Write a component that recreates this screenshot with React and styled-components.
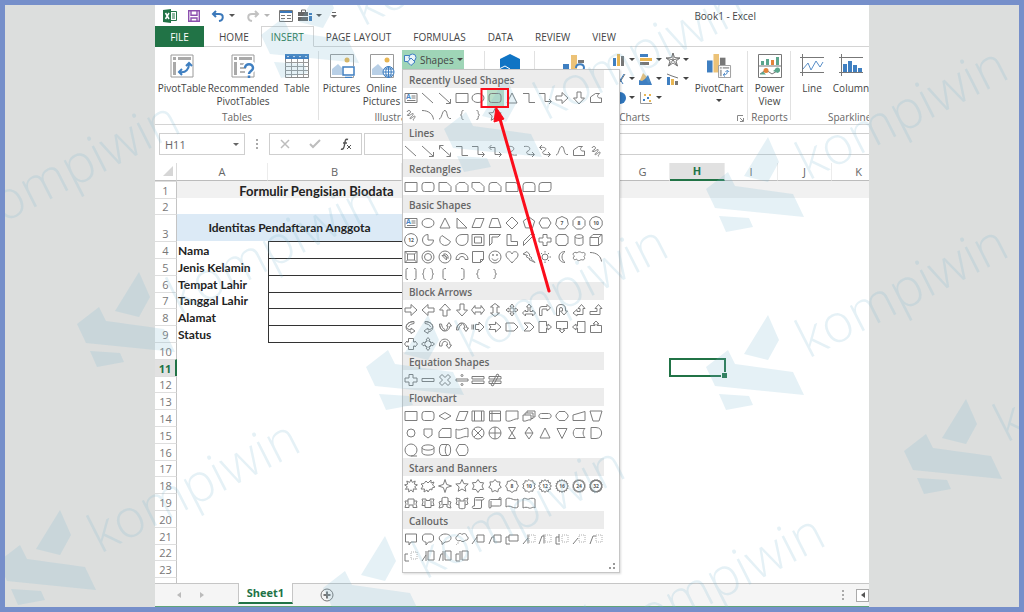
import React from "react";
import styled, { createGlobalStyle } from "styled-components";

const GlobalStyle = createGlobalStyle`
  * {
    box-sizing: border-box;
  }
  body {
    margin: 0;
    font-family: "Open Sans", "Noto Sans", sans-serif;
    font-size: 10px;
    color: #444;
  }
  button, input {
    font: inherit;
    color: inherit;
    margin: 0;
    padding: 0;
    border: 0;
    background: none;
  }
  svg {
    display: block;
    flex: none;
  }
`;

const Page = styled.div`
  position: relative;
  display: flex;
  min-height: 100vh;
  padding: 0 150px;
  border: 5px solid #768fca;
  background: #dcdedd;
  overflow: hidden;
`;

const Window = styled.main`
  flex: 1;
  min-width: 0;
  display: flex;
  flex-direction: column;
  background: #fff;
  overflow: hidden;
`;

const TitleBar = styled.header`
  display: flex;
  align-items: center;
  justify-content: space-between;
  height: 21px;
  padding: 0 113px 0 8px;
`;

const QuickAccess = styled.div`
  display: flex;
  align-items: center;
  gap: 5px;
`;

const QuickButton = styled.button`
  display: flex;
  align-items: center;
  gap: 4px;
  height: 16px;
  margin-right: ${(props) => props.$space || 0}px;
  color: ${(props) => (props.$faded ? "#b5b5b5" : "#555")};
`;

const DocTitle = styled.h1`
  margin: 0;
  font-size: 10px;
  font-weight: 400;
`;

const Caret = styled.span`
  flex: none;
  width: 0;
  height: 0;
  border: 3px solid transparent;
  border-top-color: currentColor;
  border-bottom: 0;
`;

const TabBar = styled.nav`
  display: flex;
  height: 21px;
  border-bottom: 1px solid #d4d4d4;
`;

const Tab = styled.button`
  height: 21px;
  margin: 0 1px;
  padding: 0 9px;
  border: 1px solid transparent;
  white-space: nowrap;
  ${(props) =>
    props.$active &&
    `
    color: #217346;
    background: #fff;
    border-color: #d4d4d4 #d4d4d4 #fff;
  `}
`;

const FileTab = styled.button`
  height: 21px;
  width: 49px;
  margin-right: 4px;
  background: #217346;
  color: #fff;
`;

const Ribbon = styled.div`
  display: flex;
  height: 78px;
  border-bottom: 1px solid #d4d4d4;
`;

const Group = styled.section`
  flex: none;
  position: relative;
  display: flex;
  flex-direction: column;
  width: ${(props) => props.$width}px;
  padding: 3px 3px 0;

  &::after {
    content: "";
    position: absolute;
    right: 0;
    top: 4px;
    bottom: 4px;
    border-right: 1px solid #e1e1e1;
  }
`;

const Items = styled.div`
  display: flex;
  gap: 2px;
  height: 62px;
`;

const Caption = styled.div`
  padding-right: ${(props) => (props.$launcher ? 14 : 0)}px;
  line-height: 13px;
  text-align: center;
  white-space: nowrap;
  color: #666;
`;

const Launcher = styled.button`
  position: absolute;
  right: 4px;
  bottom: 2px;
`;

const BigButton = styled.button`
  flex: none;
  display: flex;
  flex-direction: column;
  align-items: center;
  gap: 4px;
  width: ${(props) => props.$width}px;
  padding-top: 4px;
  line-height: 13px;
`;

const MiniGrid = styled.div`
  flex: none;
  display: grid;
  grid-template-columns: repeat(3, 27px);
  grid-auto-rows: 19px;
`;

const MiniButton = styled.button`
  display: flex;
  align-items: center;
  gap: 3px;
`;

const ShapesWrap = styled.div`
  position: relative;
  width: 62px;
  height: 19px;
`;

const ShapesButton = styled.button`
  display: flex;
  align-items: center;
  gap: 3px;
  width: 100%;
  height: 19px;
  padding: 0 2px;
  background: #9fd5b7;
`;

const Gallery = styled.div`
  position: absolute;
  z-index: 5;
  left: 0;
  top: 100%;
  width: 218px;
  height: 504px;
  padding-right: 15px;
  border: 1px solid #c6c6c6;
  background: #fff;
  box-shadow: 1px 1px 2px rgba(0, 0, 0, 0.15);
`;

const SectionTitle = styled.h2`
  height: 18px;
  margin: 0 0 1px;
  padding-left: 6px;
  line-height: 20px;
  font-size: 10px;
  font-weight: 600;
  background: #ececec;
  color: #666;
`;

const ShapeGrid = styled.div`
  display: grid;
  grid-template-columns: repeat(12, 1fr);
  grid-auto-rows: 17px;
`;

const ShapeButton = styled.button`
  display: flex;
  align-items: center;
  justify-content: center;
  background: ${(props) => (props.$picked ? "#b9dfc9" : "none")};
`;

const Grip = styled.svg`
  position: absolute;
  right: 3px;
  bottom: 2px;
`;

const FormulaBar = styled.div`
  display: flex;
  align-items: stretch;
  height: 38px;
  padding: 8px 0 8px 4px;
  color: #666;
`;

const NameBox = styled.label`
  display: flex;
  align-items: center;
  width: 86px;
  padding: 0 5px;
  border: 1px solid #cfcfcf;

  input {
    flex: 1;
    min-width: 0;
    outline: none;
    font-size: 11px;
  }
`;

const Dots = styled.div`
  display: flex;
  align-items: center;
  justify-content: center;
  width: 24px;
`;

const FormulaTools = styled.div`
  display: flex;
  align-items: center;
  justify-content: space-around;
  width: 93px;
  margin-right: 2px;
  border: 1px solid #cfcfcf;
`;

const FormulaInput = styled.input`
  flex: 1;
  min-width: 0;
  border: 1px solid #cfcfcf;
  border-right: 0;
`;

const SheetArea = styled.div`
  flex: 1;
  min-width: 0;
  overflow: hidden;
`;

const Sheet = styled.table`
  table-layout: fixed;
  width: 731px;
  border-spacing: 0;
  font-family: Lato, "Open Sans", sans-serif;
  font-size: 12px;
  line-height: 14px;
  color: #222;
`;

const Col = styled.col`
  width: ${(props) => props.$width}px;
`;

const ColHead = styled.th`
  height: 18px;
  padding: 0;
  border-right: 1px solid #ececec;
  border-bottom: 1px solid #bcbcbc;
  font-family: "Open Sans", sans-serif;
  font-size: 11px;
  font-weight: 400;
  color: #666;
  ${(props) =>
    props.$active &&
    `
    background: #e1e1e1;
    border-bottom: 2px solid #217346;
    color: #217346;
    font-weight: 700;
  `}
`;

const Corner = styled(ColHead)`
  border-right-color: #dcdcdc;

  svg {
    margin-left: 8px;
  }
`;

const Row = styled.tr`
  height: ${(props) => props.$height}px;
`;

const RowHead = styled.th`
  padding: 0;
  vertical-align: bottom;
  border-top: 1px solid #dedede;
  border-right: 1px solid #c4c4c4;
  font-family: "Open Sans", sans-serif;
  font-size: 11px;
  font-weight: 400;
  color: #777;
  ${(props) =>
    props.$active &&
    `
    background: #e1e1e1;
    border-right: 2px solid #217346;
    color: #217346;
    font-weight: 700;
  `}
`;

const Cell = styled.td`
  padding: 0 1px;
  font-weight: 700;
  white-space: nowrap;
  vertical-align: bottom;
`;

const TitleCell = styled(Cell)`
  text-align: center;
  font-size: 13px;
  background: #f1f1f1;
`;

const HeadingCell = styled(Cell)`
  text-align: center;
  vertical-align: middle;
  background: #dceaf6;
`;

const BoxCell = styled(Cell)`
  border-top: 1px solid #333;
  border-left: ${(props) => (props.$last ? "0" : "1px solid #333")};
`;

const ActiveCell = styled(Cell)`
  position: relative;
  outline: 2px solid #217346;
  outline-offset: -1px;

  &::after {
    content: "";
    position: absolute;
    right: -2px;
    bottom: -2px;
    width: 5px;
    height: 5px;
    border: 1px solid #fff;
    border-width: 1px 0 0 1px;
    background: #217346;
  }
`;

const SheetBar = styled.footer`
  display: flex;
  align-items: center;
  height: 24px;
  border-top: 1px solid #c6c6c6;
  border-bottom: 1px solid #60a57a;
  background: #f5f5f5;
`;

const SheetNav = styled.div`
  display: flex;
  justify-content: center;
  gap: 18px;
  width: 83px;
  padding-right: 12px;
`;

const SheetTab = styled.button`
  align-self: flex-start;
  width: 55px;
  height: 21px;
  margin-top: -1px;
  margin-right: 27px;
  border: 1px solid #c6c6c6;
  border-width: 0 1px;
  border-bottom: 2px solid #217346;
  background: #fff;
  font-weight: 700;
  font-size: 11px;
  color: #217346;
`;

const ScrollBox = styled.button`
  display: flex;
  align-items: center;
  justify-content: center;
  width: 13px;
  height: 13px;
  border: 1px solid #ababab;
  background: #fff;
`;

const BarEnd = styled.div`
  display: flex;
  align-items: center;
  gap: 12px;
  margin-left: auto;
`;

const Overlay = styled.svg`
  position: absolute;
  inset: 0;
  width: 100%;
  height: 100%;
  z-index: 10;
  pointer-events: none;
`;

// ---------- shape drawings, all on a 16 x 16 canvas ----------

const points = (list) =>
  "M" + list.map(([x, y]) => `${x.toFixed(1)} ${y.toFixed(1)}`).join("L") + "z";

const polygon = (n, r = 6, turn = 0) =>
  points(
    Array.from({ length: n }, (_, i) => {
      const a = (Math.PI * 2 * i) / n - Math.PI / 2 + turn;
      return [8 + r * Math.cos(a), 8 + r * Math.sin(a)];
    })
  );

const star = (n, outer, inner) =>
  points(
    Array.from({ length: n * 2 }, (_, i) => {
      const a = (Math.PI * i) / n - Math.PI / 2;
      const r = i % 2 ? inner : outer;
      return [8 + r * Math.cos(a), 8 + r * Math.sin(a)];
    })
  );

const circle = (r, x = 8, y = 8) =>
  `M${x - r} ${y}a${r} ${r} 0 1 0 ${r * 2} 0a${r} ${r} 0 1 0 ${-r * 2} 0z`;

const shapes = {
  textBox: "M2 3.500h12v9H2zM8.500 6h4M8.500 8h4M4 10.500h8.500",
  line: "M2 3l11 10",
  arrow: "M2 3l11 10M13.500 9v4.500H9",
  doubleArrow: "M2.500 3l11 10M13.500 9.500v4h-4M2.500 6.500v-4h4",
  elbow: "M2 3.500h6v9h6",
  elbowArrow: "M2 3.500h6v8h6M12 9l2.500 2.500L12 14",
  elbowDouble: "M3 4.500h5v7h6M12 9l2.500 2.500L12 14M4.500 2L2 4.500 4.500 7",
  curveLine: "M4 3.500c8-1 6 4 4 4.500s-3 5 5 4",
  curveArrow: "M3 3.500c8-1 6 4 4 4.500s-3 4.500 6 3.500M11 9l2.500 2.500L11 14",
  curveDouble:
    "M3 4.500c8-1 6 3 4 3.500s-3 4.500 6 3.500M11 9l2.500 2.500L11 14M5 2L2.500 4.500 5 7",
  curve: "M2 12c3 0 3-9 6-8.500s1 9 6 8",
  freeform: "M2.500 12.500V7l5-3.500h4C9 5 9 7 11 8h2.500v4.500z",
  scribble: "M4 5c1-3 5-1 3 1S3 8 5 8.500s6-4 5-1-4 3-3 4 5-4 5-2-3 3-1 4",
  arc: "M2 3.500c7 0 11 4 11.500 9",
  leftBrace: "M9.500 3.500c-3-.5-.5 4-3 4.500 2.500.5 0 5 3 4.500",
  rightBrace: "M6.500 3.500c3-.5.5 4 3 4.500-2.500.5 0 5-3 4.500",
  rectangle: "M2 3.500h12v9H2z",
  rounded: "M4.500 3.500h7q2.500 0 2.500 2.500v4q0 2.500-2.500 2.500h-7Q2 12.500 2 10V6q0-2.500 2.500-2.500z",
  oval: "M2 8c0-6 12-6 12 0s-12 6-12 0z",
  triangle: "M8 3l5 10H3z",
  rightTriangle: "M3 3v10h10z",
  parallelogram: "M5.500 3.500H14l-3.500 9H2z",
  trapezoid: "M5 3.500h6l3 9H2z",
  diamond: "M8 2l6 6-6 6-6-6z",
  pentagon: polygon(5, 6),
  hexagon: "M5 3h6l3 5-3 5H5L2 8z",
  poly7: polygon(7, 6.5),
  poly8: polygon(8, 6.5, Math.PI / 8),
  poly10: polygon(10, 6.5),
  poly12: polygon(12, 6.5),
  pie: "M8 2.500a5.500 5.500 0 1 0 5.500 5.500H8z",
  chord: "M5 3.500a5.500 5.500 0 1 0 8.500 6z",
  teardrop: "M14 2.500V8a6 5.500 0 1 1-6-5.500z",
  frame: "M2 2.500h12v11H2zM4.500 5h7v6h-7z",
  halfFrame: "M2.500 13.500v-11h11L11 5H5v6z",
  lShape: "M3 2.500h4v7h6.500v4H3z",
  diagonalStripe: "M2.500 9.500l7-7h4l-11 11z",
  cross: "M6 2.500h4V6h4v4h-4v3.500H6V10H2V6h4z",
  plaque: "M4 2.500h8q0 2 2 2v7q-2 0-2 2H4q0-2-2-2v-7q2 0 2-2z",
  can: "M4 4.500v7c0 2.500 8 2.500 8 0v-7c0-2.500-8-2.500-8 0zM4 4.500c0 2.500 8 2.500 8 0",
  cube: "M2 5.500h8.500v8H2zM2 5.500l3-3h9l-3.500 3M14 2.500v8l-3.500 3",
  bevel: "M2 2.500h12v11H2zM4.500 5h7v6h-7zM2 2.500L4.500 5M14 2.500L11.500 5M14 13.500L11.500 11M2 13.500L4.500 11",
  donut: circle(6) + circle(3.5),
  noSymbol: circle(6) + "M5 6.500A3.600 3.600 0 0 1 9.500 11zM6.500 5A3.600 3.600 0 0 1 11 9.500z",
  blockArc: "M2 10.500c0-8 12-8 12 0h-3c0-4-6-4-6 0z",
  folded: "M2.500 2.500h11v8l-3 3h-8zM13.500 10.500h-3v3",
  smiley: circle(6) + circle(0.6, 6, 6) + circle(0.6, 10, 6) + "M5 9.500c1 2.500 5 2.500 6 0",
  heart: "M8 5C7 1.500 2 2 2 6c0 3 4 5 6 8 2-3 6-5 6-8 0-4-5-4.500-6-1z",
  lightning: "M6 2.500l3 3.500-1 .5L11 9l-1 .5 4 4-6-3 1-.5-4-2.500 1.500-1L2 5z",
  sun: circle(3) + "M8 2v1.500M8 12.500V14M2 8h1.500M12.500 8H14M4 4l1 1M11 11l1 1M12 4l-1 1M5 11l-1 1",
  moon: "M11 2.500c-8 0-8 11 0 11-4-3-4-8 0-11z",
  cloud: "M3.500 7C0 5 4 2 6 4c2-2 4-1 5 0 3-2 4 2 2 3.500 2 3-1 4-3 3-2 2-4 1-4.500-.5C3 12 1 9 3.500 7z",
  doubleBracket: "M5 2.500c-2 0-2 .5-2 2v7c0 1.500 0 2 2 2M11 2.500c2 0 2 .5 2 2v7c0 1.500 0 2-2 2",
  doubleBrace: "M5.500 2.500c-3 0-1 5.500-3 5.500 2 0 0 5.500 3 5.500M10.500 2.500c3 0 1 5.500 3 5.500-2 0 0 5.500-3 5.500",
  leftBracket: "M9 2.500c-2 0-3 .5-3 2v7c0 1.500 1 2 3 2",
  rightBracket: "M7 2.500c2 0 3 .5 3 2v7c0 1.500-1 2-3 2",
  arrowRight: "M2 6h6V2.500L14 8l-6 5.500V10H2z",
  arrowLeft: "M14 6H8V2.500L2 8l6 5.500V10h6z",
  arrowUp: "M6 14V8H2.500L8 2l5.500 6H10v6z",
  arrowDown: "M6 2v6H2.500L8 14l5.500-6H10V2z",
  leftRight: "M5 3.500V6h6V3.500L14.500 8 11 12.500V10H5v2.500L1.500 8z",
  upDown: "M3.500 5H6v6H3.500L8 14.500l4.500-3.500H10V5h2.500L8 1.500z",
  quad: "M8 2l2 2.500H9V7h2.500V6L14 8l-2.500 2V9H9v2.500h1L8 14l-2-2.500h1V9H4.500v1L2 8l2.500-2v1H7V4.500H6z",
  leftRightUp: "M8 2l2.500 3H9v4.500h2.500V8l3 3-3 3v-2h-7v2l-3-3 3-3v1.500H7V5H5.500z",
  bent: "M2.500 13.500V7q0-2.500 2.500-2.500h5v-2L13.500 6 10 9V7H6q-1 0-1 1v5.500z",
  uTurn: "M2.500 13.500V7q0-4.500 4.500-4.500T11.500 7v2h2l-3.500 4L6.500 9h2V7q0-1.500-1.500-1.500T5.500 7v6.500z",
  leftUp: "M10.500 2.500l3.500 4h-2v6H6v1.500L2 11l4-3.500v2h3v-3H7z",
  bentUp: "M10.500 2.500l3.500 4h-2v6H2v-3h7v-3H7z",
  curvedRight: "M11 2.500C2 3 1 10 8 11V9l4 3-4 2.500V13C1 12 1 3 11 2.500M11 2.500v2C8 5 6 6 5.500 8",
  curvedLeft: "M5 2.500C14 3 15 10 8 11V9l-4 3 4 2.500V13c7-1 7-10-3-10.500M5 2.500v2C8 5 10 6 10.500 8",
  curvedUp: "M2.500 5C3 13 10 14 11 7H9.500L12 3.500 14.500 7H13c-1 7-10 7-10.500-2M2.500 5h2c.5 3 1.500 5 3.500 5.500",
  curvedDown: "M2.500 11C3 3 10 2 11 9H9.500l2.500 3.500L14.500 9H13C12 2 3 2 2.500 11M2.500 11h2c.5-3 1.500-5 3.500-5.500",
  striped: "M2 5.500v5M3.500 5.500v5M5.500 5.500H9V3l5 5-5 5v-2.500H5.500z",
  notched: "M2 5.500h6.500V3L14 8l-5.500 5v-2.500H2L4 8z",
  arrowPentagon: "M2 4h8l4 4-4 4H2z",
  chevron: "M3 4h6l4 4-4 4H3l4-4z",
  rightCallout: "M2 2.500h7.500V7H11V5l3.500 3-3.500 3V9H9.500v4.500H2z",
  downCallout: "M2.500 2.500h11v7H9V11h2l-3 3-3-3h2V9.500H2.500z",
  leftCallout: "M14 2.500H6.500V7H5V5L1.500 8 5 11V9h1.500v4.500H14z",
  upCallout: "M2.500 13.500h11v-7H9V5h2L8 2 5 5h2v1.500H2.500z",
  leftRightCallout: "M5.500 2.500h5V6H12V5l2.500 3-2.500 3v-1h-1.500v3.500h-5V10H4v1L1.500 8 4 5v1h1.500z",
  quadCallout: "M8 1.500l2 2.500H9v1.500h1.500V7H12V6l2.500 2-2.500 2V9h-1.500v1.500H9V12h1l-2 2.500L6 12h1v-1.500H5.500V9H4v1L1.500 8 4 6v1h1.500V5.500H7V4H6z",
  circular: "M2.500 10c-1-9 11-9 10.500-1h1.500L12 12.500 9 9h1.500C11 4 4.500 4 5 10z",
  minus: "M2 6.500h12v3H2z",
  times: "M5 2.500l3 3 3-3L13.500 5l-3 3 3 3-2.500 2.500-3-3-3 3L2.500 11l3-3-3-3z",
  divide: "M2 7h12v2H2z" + circle(1, 8, 3.5) + circle(1, 8, 12.5),
  equal: "M2 4.500h12v2.500H2zM2 9h12v2.500H2z",
  notEqual: "M2 4.500h12v2.500H2zM2 9h12v2.500H2zM10 2l2 1-6 11-2-1z",
  flatDiamond: "M8 4.500L14 8l-6 3.500L2 8z",
  predefined: "M2 3h12v10H2zM4.500 3v10M11.500 3v10",
  internal: "M2.500 3h11v10h-11zM5 3v10M2.500 5.500h11",
  document: "M2 3h12v8c-4-1-8 4-12 1.500z",
  multiDocument: "M2 7h8v5c-3-1-5 2-8 1zM4 7V5h8v5.500h-2M6 5V3h8v6h-2",
  terminator: "M4.500 5.500h7c3.500 0 3.500 5 0 5h-7c-3.500 0-3.500-5 0-5z",
  preparation: "M5 3.500h6L14 7v2l-3 3.500H5L2 9V7z",
  manualInput: "M2 7l12-3.500v9H2z",
  manualOperation: "M2 3h12l-3 10H5z",
  connector: circle(4),
  offPage: "M4 4h8v6l-4 3-4-3z",
  card: "M5 3.500h9v9H2V7z",
  tape: "M2 4c4 3 8-2 12-.5V12c-4-2-8 3-12 1z",
  junction: circle(6) + "M4 4l8 8M12 4l-8 8",
  orShape: circle(6) + "M8 2v12M2 8h12",
  collate: "M4.500 2.500h7L8 8l3.500 5.500h-7L8 8z",
  sort: "M8 2l4 6-4 6-4-6zM4 8h8",
  merge: "M8 13.500l-5-10h10z",
  stored: "M4.500 3.500H14c-2.500 2-2.500 7 0 9H4.500c-3-2-3-7 0-9z",
  delay: "M3 2.500h5c7.500 0 7.500 11 0 11H3z",
  sequential: circle(6) + "M8 14h6",
  disk: "M2 5.500v5c0 3.500 12 3.500 12 0v-5C14 2 2 2 2 5.500zM2 5.500C2 9 14 9 14 5.500",
  direct: "M5 2.500h6c3.500 0 3.500 11 0 11H5c-3.500 0-3.500-11 0-11zM10.500 2.500c-3 1-3 10 0 11",
  display: "M5 2.500h6c4 2 4 9 0 11H5L2 8z",
  explosion1: star(9, 6.5, 3.8),
  explosion2: "M6 3l2 2 3-3v3l3-1-1.500 3L15 9l-3 1v2l-2-1-2 3-1-2-3 2 .5-3L1 11l2-3-2-2 3-.5z",
  star4: star(4, 6.5, 2.2),
  star5: star(5, 6.5, 3),
  star6: star(6, 6.5, 4),
  star7: star(7, 6.5, 4.5),
  star8: star(8, 6.5, 5.3),
  star10: star(10, 6.5, 5.2),
  star12: star(12, 6.5, 5),
  star16: star(16, 6.5, 5),
  star24: star(24, 6.5, 5),
  star32: star(32, 6.5, 5),
  ribbonUp: "M2 6h3V4h6v2h3l-1 3 1 3.500h-4V10H6v2.500H2L3 9zM5 6v4M11 6v4",
  ribbonDown: "M2 4h4v1.500h4V4h4l-1 3 1 3.500h-3v2H5v-2H2L3 7zM5 5.500v5M11 5.500v5",
  curvedRibbonUp: "M2 7l3-1V3c2-1 4-1 6 0v3l3 1-1 3 1 3-4-1V9.500H6V12l-4 1 1-3zM5 6v4M11 6v4",
  curvedRibbonDown: "M2 3l4 1v2h4V4l4-1-1 3 1 3-3 1v3c-2 1-4 1-6 0v-3L2 9l1-3zM5 5v5M11 5v5",
  verticalScroll: "M5 2.500h8q2 1 0 2.500h-1.500v7q0 1.500-1.500 1.500H3q-1.500-1 0-2.500h1.500V4q0-1 .5-1.500M5.500 5h6",
  horizontalScroll: "M2 6q0-1.500 1.500-1.500H12V3q2-1 2 .5V10q0 1-1.500 1H4v1.500q-2 1.500-2-.5zM4 6v5M12 4.500h2",
  wave: "M2 4c4-3 8 3 12 0v8c-4 3-8-3-12 0z",
  doubleWave: "M2 4c2-2 4 1 6 0s4-1 6 0v9c-2-2-4 1-6 0s-4-1-6 0z",
  rectCallout: "M2.500 3h11v8H8l-2 3v-3H2.500z",
  roundCallout: "M4.500 3h7l2 2v4l-2 2H8.500L6 14v-3H4.500l-2-2V5z",
  ovalCallout: "M5 13.500V11C-1 7 4 3 8 3c8 0 8 8 0 8z",
  cloudCallout: "M4 4.500C4 2 7 2 8 3.500c2-2 5-.5 4.500 1.500 3 1 1.500 5-1 4-1 2-4 2-5 .5C2 11 0 6 4 4.500zM4 11.500v1M2.500 13.500v.5",
  callout1: "M7 4h7v7H7zM7 6l-5 7",
  callout2: "M7 4h7v7H7zM7 6H5l-3 7",
  callout3: "M5 4h9v6H5zM5 6H2v7h4",
  calloutBar1: "M7 3.500v9M7 7l-5 6",
  calloutBar2: "M7 3.500v9M7 5H5l-3 8",
  calloutBar3: "M5 3v8M5 6H2v7h4",
  calloutPlain1: "M7 7l-5 6",
  calloutPlain2: "M8 5H5l-3 8",
  calloutPlain3: "M5 6H2v7h4",
  calloutAccent1: "M8 3h6v9H8zM6 3v10M6 7l-4 6",
  calloutAccent2: "M8 3h6v9H8zM6 3v10M6 6H4l-2 7",
  calloutAccent3: "M8 3h6v9H8zM6 3v9M5 6H2v7h4",
  snip1: "M2 3.500h8l4 4v5H2z",
  snip2: "M5 3.500h6l3 3v6H2v-6z",
  snipDiagonal: "M2 3.500h8l4 4v5H6l-4-4z",
  snipRound: "M5 3.500h5l4 4v5H2v-6q0-3 3-3z",
  round1: "M2 3.500h9q3 0 3 3v6H2z",
  round2: "M5 3.500h6q3 0 3 3v6H2v-6q0-3 3-3z",
  roundDiagonal: "M5 3.500h9v6q0 3-3 3H2v-6q0-3 3-3z",
};

const dotted = [
  "calloutBar1",
  "calloutBar2",
  "calloutBar3",
  "calloutPlain1",
  "calloutPlain2",
  "calloutPlain3",
];

const sections = [
  {
    title: "Recently Used Shapes",
    items:
      "textBox line arrow rectangle oval rounded triangle elbow elbowArrow arrowRight arrowDown freeform scribble arc curve leftBrace rightBrace star5",
  },
  {
    title: "Lines",
    items:
      "line arrow doubleArrow elbow elbowArrow elbowDouble curveLine curveArrow curveDouble curve freeform scribble",
  },
  {
    title: "Rectangles",
    items: "rectangle rounded snip1 snip2 snipDiagonal snipRound round1 round2 roundDiagonal",
  },
  {
    title: "Basic Shapes",
    items:
      "textBox oval triangle rightTriangle parallelogram trapezoid diamond pentagon hexagon poly7 poly8 poly10 poly12 pie chord teardrop frame halfFrame lShape diagonalStripe cross plaque can cube bevel donut noSymbol blockArc folded smiley heart lightning sun moon cloud arc doubleBracket doubleBrace leftBracket rightBracket leftBrace rightBrace",
  },
  {
    title: "Block Arrows",
    items:
      "arrowRight arrowLeft arrowUp arrowDown leftRight upDown quad leftRightUp bent uTurn leftUp bentUp curvedRight curvedLeft curvedUp curvedDown striped notched arrowPentagon chevron rightCallout downCallout leftCallout upCallout leftRightCallout quadCallout circular",
  },
  {
    title: "Equation Shapes",
    items: "cross minus times divide equal notEqual",
  },
  {
    title: "Flowchart",
    items:
      "rectangle rounded flatDiamond parallelogram predefined internal document multiDocument terminator preparation manualInput manualOperation connector offPage card tape junction orShape collate sort triangle merge stored delay sequential disk direct display",
  },
  {
    title: "Stars and Banners",
    items:
      "explosion1 explosion2 star4 star5 star6 star7 star8 star10 star12 star16 star24 star32 ribbonUp ribbonDown curvedRibbonUp curvedRibbonDown verticalScroll horizontalScroll wave doubleWave",
  },
  {
    title: "Callouts",
    items:
      "rectCallout roundCallout ovalCallout cloudCallout callout1 callout2 callout3 calloutBar1 calloutBar2 calloutBar3 calloutPlain1 calloutPlain2 calloutPlain3 calloutAccent1 calloutAccent2 calloutAccent3",
  },
];

const Shape = ({ name }) => {
  const number = /^(poly|star)(\d+)$/.exec(name);
  const showNumber =
    number && (number[1] === "poly" || Number(number[2]) >= 8);
  return (
    <svg width="16" height="16" viewBox="0 0 16 16" fill="none" stroke="#7d7d7d">
      <path d={shapes[name]} />
      {dotted.includes(name) && (
        <path d="M8 4h6v7H8z" stroke="#b0b0b0" strokeDasharray="1 1" />
      )}
      {name === "textBox" && (
        <text x="3" y="9" fontSize="7" fontWeight="700" fill="#4a86c5" stroke="none">
          A
        </text>
      )}
      {showNumber && (
        <text x="8" y="10" fontSize="5" fontWeight="700" textAnchor="middle" fill="#555" stroke="none">
          {number[2]}
        </text>
      )}
    </svg>
  );
};

// ---------- ribbon icons ----------

const PivotIcon = ({ question }) => (
  <svg width="24" height="24" viewBox="0 0 24 24" fill="none">
    <path d="M1 1h22v22H1z" fill="#fff" stroke="#9a9a9a" />
    <path d="M3 3h3v3H3zM8 3h13v3H8zM3 8h3v13H3z" fill="#a9a9a9" />
    {question ? (
      <>
        <path d="M9 10h6M9 14h6M9 18h5" stroke="#b5b5b5" strokeWidth="2" />
        <path d="M14 13c0-5 9-5 9 0 0 4-4.500 3-4.500 7" stroke="#fff" strokeWidth="5" />
        <path d="M14 14c0-5 8-5 8 0 0 3-4 3-4 6M18 21.500V24" stroke="#3f7fc1" strokeWidth="2.500" />
      </>
    ) : (
      <path d="M10 18c6 1 9-3 9-8M16 12l3-3 3 3M12 15l-3 3 3 3" stroke="#3f7fc1" strokeWidth="2" />
    )}
  </svg>
);

const TableIcon = () => (
  <svg width="24" height="24" viewBox="0 0 24 24">
    <path d="M.5.500h23v23H.5z" fill="#fff" stroke="#8a8a8a" />
    <path d="M0 0h24v5H0z" fill="#3f7fc1" />
    <path d="M2 2h2l-1 1.500zM8 2h2L9 3.500zM14 2h2l-1 1.500zM20 2h2l-1 1.500z" fill="#fff" />
    <path d="M6.500 5v18M12.500 5v18M18.500 5v18M0 8.500h24M0 12.500h24M0 16.500h24M0 20.500h24" stroke="#9a9a9a" />
  </svg>
);

const PictureIcon = ({ online }) => (
  <svg width="26" height="24" viewBox="0 0 26 24" fill="none">
    <path d="M1.500.500h23v23h-23z" fill="#fff" stroke="#9a9a9a" />
    <path d="M3 21V15l6-5 6 6v5z" fill="#b8cfe6" />
    <circle cx="18" cy="6" r="2.500" fill="#e8b653" />
    {online ? (
      <g stroke="#3f7fc1">
        <circle cx="19.500" cy="18" r="5.500" fill="#fff" />
        <path d="M14 18h11M19.500 12.500v11M15 15h9M15 21h9" />
        <ellipse cx="19.500" cy="18" rx="2.700" ry="5.500" />
      </g>
    ) : (
      <g>
        <path d="M13 12h13v10H13z" fill="#fff" />
        <path d="M14 13h11v8H14z" fill="#fff" stroke="#3f7fc1" strokeWidth="1.500" />
        <path d="M16 23.500h7" stroke="#3f7fc1" strokeWidth="1.500" />
      </g>
    )}
  </svg>
);

const ShapesIcon = () => (
  <svg width="13" height="13" viewBox="0 0 13 13" fill="#e9f4f8" stroke="#3f7fc1">
    <path d="M.5 2.500h7v6h-7z" />
    <circle cx="8.500" cy="4.500" r="3.500" />
    <path d="M7 5l4 4-4 3.500L3.500 9z" />
  </svg>
);

const AppsIcon = () => (
  <svg width="24" height="24" viewBox="0 0 24 24">
    <path d="M12 0l10 5v11l-10 6L2 16V5z" fill="#0f74c4" />
    <path d="M1 15l6-3 5 3v6l-6 3-5-3z" fill="#0f74c4" stroke="#fff" />
  </svg>
);

const RecommendedChartIcon = () => (
  <svg width="24" height="24" viewBox="0 0 24 24">
    <path d="M1 10h6v12H1z" fill="#3f7fc1" />
    <path d="M9 1h6v21H9z" fill="#ecc277" />
    <path d="M16 6h6v3h-6z" fill="#777" />
    <path d="M14 14c0-5 8-5 8 0 0 3-4 3-4 6" stroke="#3f7fc1" strokeWidth="2" fill="none" />
  </svg>
);

const PivotChartIcon = () => (
  <svg width="26" height="24" viewBox="0 0 26 26">
    <path d="M0 7h6v13H0z" fill="#3f7fc1" />
    <path d="M7 0h6v20H7z" fill="#ecc277" />
    <path d="M14 4h6v8h-6z" fill="#777" />
    <path d="M12.500 12.500h13v13h-13z" fill="#fff" stroke="#999" />
    <path d="M14 14h2v2h-2zM17 14h7v2h-7zM14 17h2v7h-2z" fill="#aaa" />
    <path d="M18 22.500c3 0 4-1 4-4M20 19.500l2-2 2 2M19.500 20.500l-2 2 2 2" stroke="#3f7fc1" fill="none" />
  </svg>
);

const PowerViewIcon = () => (
  <svg width="24" height="24" viewBox="0 0 24 24">
    <path d="M.5.500h23v23H.5zM.5 12h23" fill="#fff" stroke="#777" />
    <path d="M3 7h3v4H3zM8 5h3v6H8zM18 3h3v8h-3z" fill="#5ba58c" />
    <path d="M13 6h3v5h-3z" fill="#e2823a" />
    <path d="M2 20l6-4 6 4 7-4" stroke="#777" fill="none" />
    <path d="M2 20.500l3-3 3 3zM15 17l4-3 3 2-2 3z" fill="#5ba58c" />
    <circle cx="8" cy="16.500" r="2.500" fill="#e2823a" />
    <circle cx="19.500" cy="16" r="2.500" fill="#5ba58c" />
  </svg>
);

const SparkIcon = ({ columns }) => (
  <svg width="24" height="24" viewBox="0 0 24 24" fill="none">
    <path d="M2.500 0v22M0 3.500h24M0 18.500h24" stroke="#777" />
    {columns ? (
      <path d="M4 10h4v8H4zM9 7h4v11H9zM14 11h4v7h-4zM19 14h4v4h-4z" fill="#3f7fc1" />
    ) : (
      <path d="M3 15l5-6 3 7 5-9 4 6 3-5" stroke="#5a8fc8" />
    )}
  </svg>
);

const miniCharts = [
  {
    name: "Column chart",
    art: (
      <>
        <path d="M1 5h3v8H1z" fill="#3f7fc1" />
        <path d="M5 1h3v12H5z" fill="#e8b653" />
        <path d="M9 3h3v10H9z" fill="#777" />
      </>
    ),
  },
  {
    name: "Bar chart",
    art: (
      <>
        <path d="M1 1h8v3H1z" fill="#3f7fc1" />
        <path d="M1 5h12v3H1z" fill="#e8b653" />
        <path d="M1 9h9v3H1z" fill="#777" />
      </>
    ),
  },
  {
    name: "Radar chart",
    art: (
      <path
        d="M7 0l1.500 4.500L14 5l-4 3 1.500 5L7 10l-4.500 3L4 8 0 5l5.500-.5zM7 0v7M7 7l7-2M7 7l4.500 6M7 7l-4.500 6M7 7L0 5"
        fill="none"
        stroke="#777"
      />
    ),
  },
  {
    name: "Line chart",
    art: (
      <>
        <path d="M1 12l4-8 3 6 5-8" fill="none" stroke="#777" />
        <path d="M5 2l6 10M12 2L6 12" fill="none" stroke="#3f7fc1" />
      </>
    ),
  },
  {
    name: "Area chart",
    art: (
      <>
        <path d="M1 8l3-7 4 4v5H1z" fill="#e0bf80" />
        <path d="M0 13V8l3 1 3-2 3-4 4 10z" fill="#3f7fc1" />
      </>
    ),
  },
  {
    name: "Combo chart",
    art: (
      <>
        <path d="M1 5h3v8H1z" fill="#3f7fc1" />
        <path d="M5 7h3v6H5z" fill="#e8b653" />
        <path d="M9 9h3v4H9z" fill="#777" />
        <path d="M1 2l5 2 6 2" fill="none" stroke="#777" />
      </>
    ),
  },
  { name: "Pie chart", art: <circle cx="8" cy="7" r="6" fill="#2f75bb" /> },
  {
    name: "Scatter chart",
    art: (
      <>
        <path d="M1.500 1v11.500H13" fill="none" stroke="#999" />
        <path d="M4 8h2v2H4zM8 6h2v2H8z" fill="#3f7fc1" />
        <path d="M5 3h2v2H5zM10 9h2v2h-2zM10 3h2v2h-2z" fill="#e8b653" />
      </>
    ),
  },
];

const galleryLabel = (name) => name.replace(/([A-Z])/g, " $1").toLowerCase();

const ShapeGallery = () => (
  <Gallery>
    {sections.map((section, s) => (
      <div key={section.title}>
        <SectionTitle>{section.title}</SectionTitle>
        <ShapeGrid>
          {section.items.split(" ").map((name, i) => (
            <ShapeButton
              key={name + i}
              aria-label={galleryLabel(name)}
              $picked={s === 0 && name === "rounded"}
            >
              <Shape name={name} />
            </ShapeButton>
          ))}
        </ShapeGrid>
      </div>
    ))}
    <Grip width="7" height="7" viewBox="0 0 7 7" fill="#999">
      <path d="M4 0h2v2H4zM0 4h2v2H0zM4 4h2v2H4z" />
    </Grip>
  </Gallery>
);

// ---------- sheet data ----------

const columns = [
  ["A", 91],
  ["B", 134],
  ["C", 54],
  ["D", 53],
  ["E", 54],
  ["F", 53],
  ["G", 54],
  ["H", 55],
  ["I", 53],
  ["J", 54],
  ["K", 54],
];

const labels = {
  4: "Nama",
  5: "Jenis Kelamin",
  6: "Tempat Lahir",
  7: "Tanggal Lahir",
  8: "Alamat",
  9: "Status",
};

const rowHeight = (n) => {
  if (n === 3) return 27;
  return n % 5 === 2 ? 16 : 17;
};

const rows = Array.from({ length: 23 }, (_, i) => i + 1);

const SheetRow = ({ n }) => {
  let cells = <Cell colSpan={11} />;
  if (n === 1) {
    cells = (
      <>
        <TitleCell colSpan={3}>Formulir Pengisian Biodata</TitleCell>
        <TitleCell colSpan={8} />
      </>
    );
  } else if (n === 3) {
    cells = (
      <>
        <HeadingCell colSpan={2}>Identitas Pendaftaran Anggota</HeadingCell>
        <Cell colSpan={9} />
      </>
    );
  } else if (n >= 4 && n <= 10) {
    cells = (
      <>
        <Cell>{labels[n]}</Cell>
        <BoxCell $last={n === 10} />
        <Cell colSpan={9} />
      </>
    );
  } else if (n === 11) {
    cells = (
      <>
        <Cell colSpan={7} />
        <ActiveCell />
        <Cell colSpan={3} />
      </>
    );
  }
  return (
    <Row $height={rowHeight(n)}>
      <RowHead $active={n === 11}>{n}</RowHead>
      {cells}
    </Row>
  );
};

const marks = [
  [706, 189],
  [706, 367],
  [904, 451],
  [-2, 562],
  [323, 588],
  [77, 324],
  [366, 367],
  [444, 129],
  [261, 35],
  [-122, 243],
  [523, 656],
];

const Watermark = () => (
  <Overlay aria-hidden="true">
    <g transform="translate(-5 -5)" fill="#7db9d2" fillOpacity="0.2">
      {marks.map(([x, y]) => (
        <g key={`${x},${y}`} transform={`translate(${x} ${y})`}>
          <path d="M62-52l11 25-11 20-24-6zM0 0l22-17 7 14 58 8 11 23-89-9zM13 27l30 2 4 9-27 5z" />
          <text
            transform="translate(102 -8) rotate(-27)"
            fontFamily="Open Sans"
            fontWeight="300"
            fontSize="53"
          >
            kompiwin
          </text>
        </g>
      ))}
    </g>
    <g transform="translate(-5 -5)" stroke="#fb0d1b" fill="none">
      <path d="M481.500 89h26.500v18h-26.500z" strokeWidth="2" />
      <path d="M549 291L500 119" strokeWidth="3" strokeLinecap="round" />
      <path d="M496 107l8 12-10 3z" fill="#fb0d1b" />
    </g>
  </Overlay>
);

const App = () => {
  return (
    <Page>
      <GlobalStyle />
      <Window>
        <TitleBar>
          <QuickAccess>
            <QuickButton aria-label="Excel" $space={6}>
              <svg width="14" height="14" viewBox="0 0 14 14">
                <path d="M7 2.500h6.500v9H7z" fill="#fff" stroke="#217346" />
                <path d="M9 5h3M9 7h3M9 9h3" stroke="#217346" />
                <path d="M0 1l8-1v14l-8-1z" fill="#217346" />
                <path d="M2.500 4l3.500 6M6 4l-3.500 6" stroke="#fff" strokeWidth="1.500" />
              </svg>
            </QuickButton>
            <QuickButton aria-label="Save" $space={6}>
              <svg width="12" height="12" viewBox="0 0 12 12" fill="none" stroke="#8b4fae">
                <path d="M.7.700h10.600v10.600H.7zM3 .7v4.500h6V.7M3 11V8h6v3" strokeWidth="1.400" />
              </svg>
            </QuickButton>
            <QuickButton aria-label="Undo" $space={6}>
              <svg width="14" height="12" viewBox="0 0 14 12" fill="none" stroke="#3b78ba" strokeWidth="2">
                <path d="M5 1L2 4l3 3M2 4h6c5 0 5 6 0 7" />
              </svg>
              <Caret />
            </QuickButton>
            <QuickButton aria-label="Redo" $faded $space={4}>
              <svg width="14" height="12" viewBox="0 0 14 12" fill="none" stroke="#c2c2c2" strokeWidth="2">
                <path d="M9 1l3 3-3 3M12 4H6c-5 0-5 6 0 7" />
              </svg>
              <Caret />
            </QuickButton>
            <QuickButton aria-label="Form">
              <svg width="14" height="12" viewBox="0 0 14 12" fill="none" stroke="#777">
                <path d="M.5.500h13v11H.5z" />
                <path d="M1 2h12" stroke="#3b78ba" strokeWidth="2" />
                <path d="M2 5.500h4M2 8.500h4M8 5.500h4M8 8.500h4" />
              </svg>
            </QuickButton>
            <QuickButton aria-label="Tools" $space={4}>
              <svg width="14" height="13" viewBox="0 0 14 13">
                <path d="M0 3h10v4H0zM0 8h10v4H0z" fill="#666" />
                <path d="M3.500 3V1h4v2" fill="none" stroke="#666" />
                <path d="M11 4h3v2h-3zM11 7h3v5h-3z" fill="#3b78ba" />
              </svg>
              <Caret />
            </QuickButton>
            <QuickButton aria-label="Customize">
              <svg width="6" height="7" viewBox="0 0 6 7">
                <path d="M1 .5h4" stroke="#666" />
                <path d="M0 3h6L3 6z" fill="#666" />
              </svg>
            </QuickButton>
          </QuickAccess>
          <DocTitle>Book1 - Excel</DocTitle>
        </TitleBar>

        <TabBar>
          <FileTab>FILE</FileTab>
          <Tab>HOME</Tab>
          <Tab $active>INSERT</Tab>
          <Tab>PAGE LAYOUT</Tab>
          <Tab>FORMULAS</Tab>
          <Tab>DATA</Tab>
          <Tab>REVIEW</Tab>
          <Tab>VIEW</Tab>
        </TabBar>

        <Ribbon>
          <Group $width={164}>
            <Items>
              <BigButton $width={48}>
                <PivotIcon />
                PivotTable
              </BigButton>
              <BigButton $width={70}>
                <PivotIcon question />
                Recommended PivotTables
              </BigButton>
              <BigButton $width={34}>
                <TableIcon />
                Table
              </BigButton>
            </Items>
            <Caption>Tables</Caption>
          </Group>
          <Group $width={166}>
            <Items>
              <BigButton $width={39}>
                <PictureIcon />
                Pictures
              </BigButton>
              <BigButton $width={37}>
                <PictureIcon online />
                Online Pictures
              </BigButton>
              <ShapesWrap>
                <ShapesButton aria-expanded="true">
                  <ShapesIcon />
                  Shapes
                  <Caret />
                </ShapesButton>
                <ShapeGallery />
              </ShapesWrap>
            </Items>
            <Caption>Illustrations</Caption>
          </Group>
          <Group $width={50}>
            <Items>
              <BigButton $width={44} aria-label="Apps">
                <AppsIcon />
              </BigButton>
            </Items>
          </Group>
          <Group $width={213}>
            <Items>
              <BigButton $width={72} aria-label="Recommended Charts">
                <RecommendedChartIcon />
              </BigButton>
              <MiniGrid>
                {miniCharts.map((chart) => (
                  <MiniButton key={chart.name} aria-label={chart.name}>
                    <svg width="14" height="14" viewBox="0 0 14 14">
                      {chart.art}
                    </svg>
                    <Caret />
                  </MiniButton>
                ))}
              </MiniGrid>
              <BigButton $width={48}>
                <PivotChartIcon />
                PivotChart
                <Caret />
              </BigButton>
            </Items>
            <Caption $launcher>Charts</Caption>
            <Launcher aria-label="Charts options">
              <svg width="7" height="7" viewBox="0 0 7 7" fill="none" stroke="#888">
                <path d="M.5 6V.5H6M3 3l3 3M6.500 3v3.500H3" />
              </svg>
            </Launcher>
          </Group>
          <Group $width={43}>
            <Items>
              <BigButton $width={37}>
                <PowerViewIcon />
                Power View
              </BigButton>
            </Items>
            <Caption>Reports</Caption>
          </Group>
          <Group $width={122}>
            <Items>
              <BigButton $width={36}>
                <SparkIcon />
                Line
              </BigButton>
              <BigButton $width={38}>
                <SparkIcon columns />
                Column
              </BigButton>
            </Items>
            <Caption>Sparklines</Caption>
          </Group>
        </Ribbon>

        <FormulaBar>
          <NameBox>
            <input aria-label="Name box" defaultValue="H11" />
            <Caret />
          </NameBox>
          <Dots>
            <svg width="2" height="10" viewBox="0 0 2 10" fill="#aaa">
              <path d="M0 0h2v2H0zM0 4h2v2H0zM0 8h2v2H0z" />
            </svg>
          </Dots>
          <FormulaTools>
            <button aria-label="Cancel">
              <svg width="10" height="10" viewBox="0 0 10 10" stroke="#bdbdbd" strokeWidth="1.500">
                <path d="M1 1l8 8M9 1L1 9" />
              </svg>
            </button>
            <button aria-label="Enter">
              <svg width="12" height="10" viewBox="0 0 12 10" fill="none" stroke="#bdbdbd" strokeWidth="2">
                <path d="M1 5l3 3 7-7" />
              </svg>
            </button>
            <button aria-label="Insert function">
              <svg width="12" height="13" viewBox="0 0 12 13" fill="none" stroke="#555">
                <path d="M8 1.500C5 0 5 4 4.500 7S3 12 1 11M3 5h4" strokeWidth="1.400" />
                <path d="M7 7l4 4M11 7l-4 4" />
              </svg>
            </button>
          </FormulaTools>
          <FormulaInput aria-label="Formula" />
        </FormulaBar>

        <SheetArea>
          <Sheet>
            <colgroup>
              <Col $width={22} />
              {columns.map(([name, width]) => (
                <Col key={name} $width={width} />
              ))}
            </colgroup>
            <thead>
              <tr>
                <Corner aria-label="Select all">
                  <svg width="11" height="11" viewBox="0 0 11 11" fill="#d6d6d6">
                    <path d="M10 0v10H0z" />
                  </svg>
                </Corner>
                {columns.map(([name]) => (
                  <ColHead key={name} $active={name === "H"}>
                    {name}
                  </ColHead>
                ))}
              </tr>
            </thead>
            <tbody>
              {rows.map((n) => (
                <SheetRow key={n} n={n} />
              ))}
              <Row $height={6}>
                <RowHead />
                <Cell colSpan={11} />
              </Row>
            </tbody>
          </Sheet>
        </SheetArea>

        <SheetBar>
          <SheetNav>
            <button aria-label="Previous sheet">
              <svg width="5" height="6" viewBox="0 0 5 6" fill="#bbb">
                <path d="M4 0v6L0 3z" />
              </svg>
            </button>
            <button aria-label="Next sheet">
              <svg width="5" height="6" viewBox="0 0 5 6" fill="#bbb">
                <path d="M0 0v6l4-3z" />
              </svg>
            </button>
          </SheetNav>
          <SheetTab>Sheet1</SheetTab>
          <button aria-label="New sheet">
            <svg width="14" height="14" viewBox="0 0 14 14" fill="none" stroke="#777">
              <circle cx="7" cy="7" r="6" />
              <path d="M3.500 7h7M7 3.500v7" strokeWidth="2" />
            </svg>
          </button>
          <BarEnd>
            <svg width="2" height="10" viewBox="0 0 2 10" fill="#aaa">
              <path d="M0 0h2v2H0zM0 4h2v2H0zM0 8h2v2H0z" />
            </svg>
            <ScrollBox aria-label="Scroll left">
              <svg width="4" height="6" viewBox="0 0 4 6" fill="#555">
                <path d="M4 0v6L0 3z" />
              </svg>
            </ScrollBox>
          </BarEnd>
        </SheetBar>
      </Window>
      <Watermark />
    </Page>
  );
};

export default App;
